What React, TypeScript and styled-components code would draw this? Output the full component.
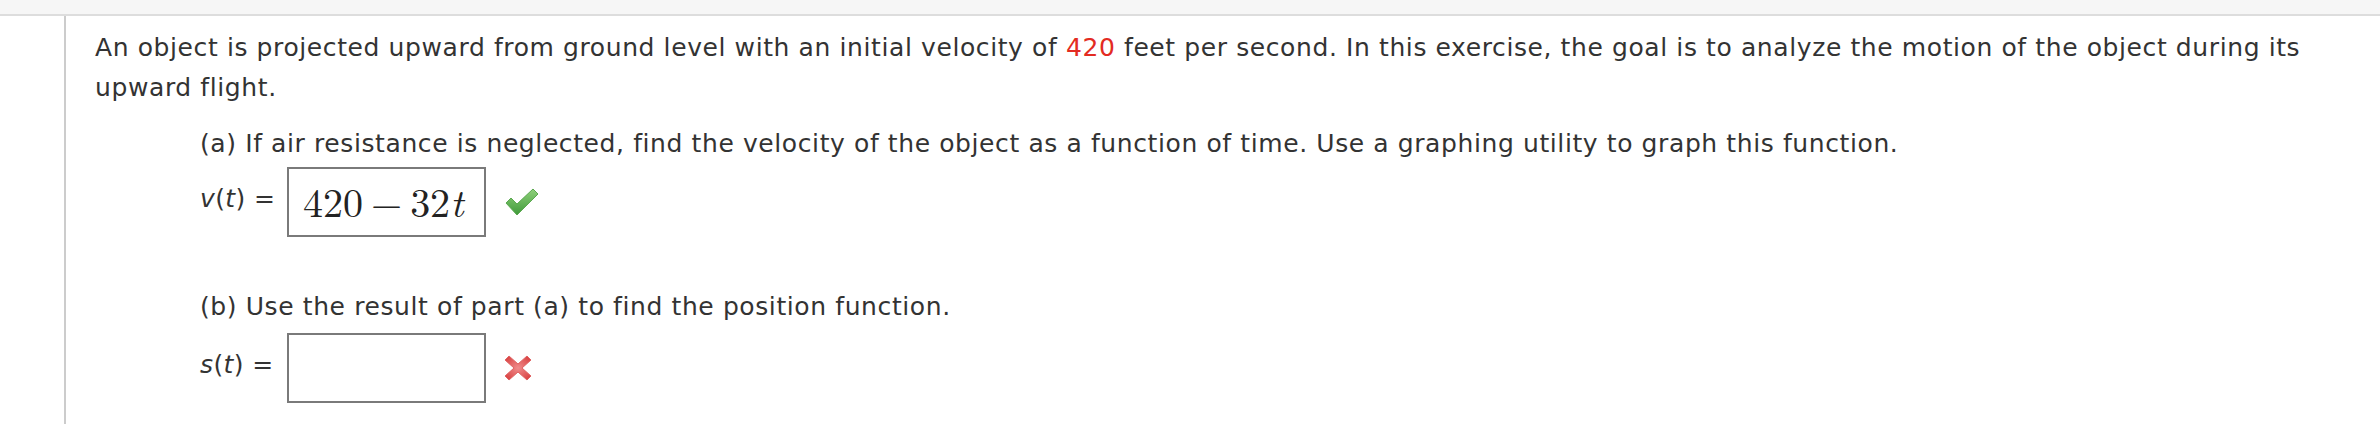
import React from "react";
import { createGlobalStyle, styled } from "styled-components";

const GlobalStyle = createGlobalStyle`
  html, body {
    margin: 0;
    padding: 0;
    background: #ffffff;
  }
  body {
    font-family: "DejaVu Sans", Verdana, sans-serif;
    color: #333333;
  }
`;

const TopBar = styled.div`
  height: 14px;
  background: #f6f6f6;
  border-bottom: 2px solid #dddddd;
`;

const Main = styled.div`
  display: flex;
  min-height: 408px;
`;

const Gutter = styled.div`
  width: 64px;
  flex-shrink: 0;
  border-right: 2px solid #cccccc;
`;

const Content = styled.div`
  flex: 1;
  padding: 12px 40px 0 29px;
  font-size: 25px;
  letter-spacing: 0.6px;
  line-height: 40px;
`;

const Intro = styled.p`
  margin: 0;
`;

const Highlight = styled.span`
  color: #e32b22;
`;

const Part = styled.div<{ $gap: number }>`
  margin-top: ${(p) => p.$gap}px;
  padding-left: 105px;
`;

const Question = styled.p`
  margin: 0;
`;

const AnswerRow = styled.div<{ $gap: number }>`
  margin-top: ${(p) => p.$gap}px;
  display: flex;
  align-items: center;
  height: 70px;
`;

const Label = styled.span`
  width: 87px;
  flex-shrink: 0;
  padding-bottom: 6px;
  letter-spacing: 0.4px;
`;

const Var = styled.i`
  font-style: italic;
`;

const AnswerBox = styled.div`
  box-sizing: border-box;
  width: 199px;
  height: 70px;
  border: 2px solid #7a7a7a;
  display: flex;
  align-items: center;
  padding-left: 14px;
  background: #ffffff;
`;

const MathText = styled.span`
  font-family: "Latin Modern Roman", "Liberation Serif", "DejaVu Serif", serif;
  font-size: 40px;
  letter-spacing: 0;
  line-height: 1;
  color: #222222;
  white-space: nowrap;
  padding-bottom: 2px;
`;

const MathOp = styled.span`
  padding: 0 8px;
`;

const MathVar = styled.i`
  font-style: italic;
`;

const Mark = styled.span`
  margin-left: 18px;
  display: flex;
  align-items: center;
`;

function CheckIcon() {
  return (
    <svg width="36" height="32" viewBox="0 0 36 32">
      <defs>
        <linearGradient id="chk" x1="0" y1="0" x2="0" y2="1">
          <stop offset="0" stopColor="#8fd07a" />
          <stop offset="1" stopColor="#3f9a3a" />
        </linearGradient>
      </defs>
      <path
        d="M2 17 L7 12 L13 18 L29 3 L34 8 L13 29 Z"
        fill="url(#chk)"
        stroke="#5aa84f"
        strokeWidth="1"
        strokeLinejoin="round"
      />
    </svg>
  );
}

function CrossIcon() {
  return (
    <svg width="28" height="28" viewBox="0 0 28 28">
      <defs>
        <radialGradient id="crs" cx="0.5" cy="0.5" r="0.6">
          <stop offset="0" stopColor="#f08b8b" />
          <stop offset="1" stopColor="#d94444" />
        </radialGradient>
      </defs>
      <path
        d="M5 2 L14 10 L23 2 L27 6 L18 14 L27 22 L23 26 L14 18 L5 26 L1 22 L10 14 L1 6 Z"
        fill="url(#crs)"
        stroke="#e06464"
        strokeWidth="1"
        strokeLinejoin="round"
      />
    </svg>
  );
}

export default function App() {
  return (
    <>
      <GlobalStyle />
      <TopBar />
      <Main>
        <Gutter />
        <Content>
          <Intro>
            An object is projected upward from ground level with an initial velocity of{" "}
            <Highlight>420</Highlight> feet per second. In this exercise, the goal is to
            analyze the motion of the object during its upward flight.
          </Intro>

          <Part $gap={16}>
            <Question>
              (a) If air resistance is neglected, find the velocity of the object as a
              function of time. Use a graphing utility to graph this function.
            </Question>
            <AnswerRow $gap={3}>
              <Label>
                <Var>v</Var>(<Var>t</Var>) =
              </Label>
              <AnswerBox>
                <MathText>
                  420<MathOp>−</MathOp>32<MathVar>t</MathVar>
                </MathText>
              </AnswerBox>
              <Mark>
                <CheckIcon />
              </Mark>
            </AnswerRow>
          </Part>

          <Part $gap={50}>
            <Question>(b) Use the result of part (a) to find the position function.</Question>
            <AnswerRow $gap={6}>
              <Label>
                <Var>s</Var>(<Var>t</Var>) =
              </Label>
              <AnswerBox />
              <Mark>
                <CrossIcon />
              </Mark>
            </AnswerRow>
          </Part>
        </Content>
      </Main>
    </>
  );
}
